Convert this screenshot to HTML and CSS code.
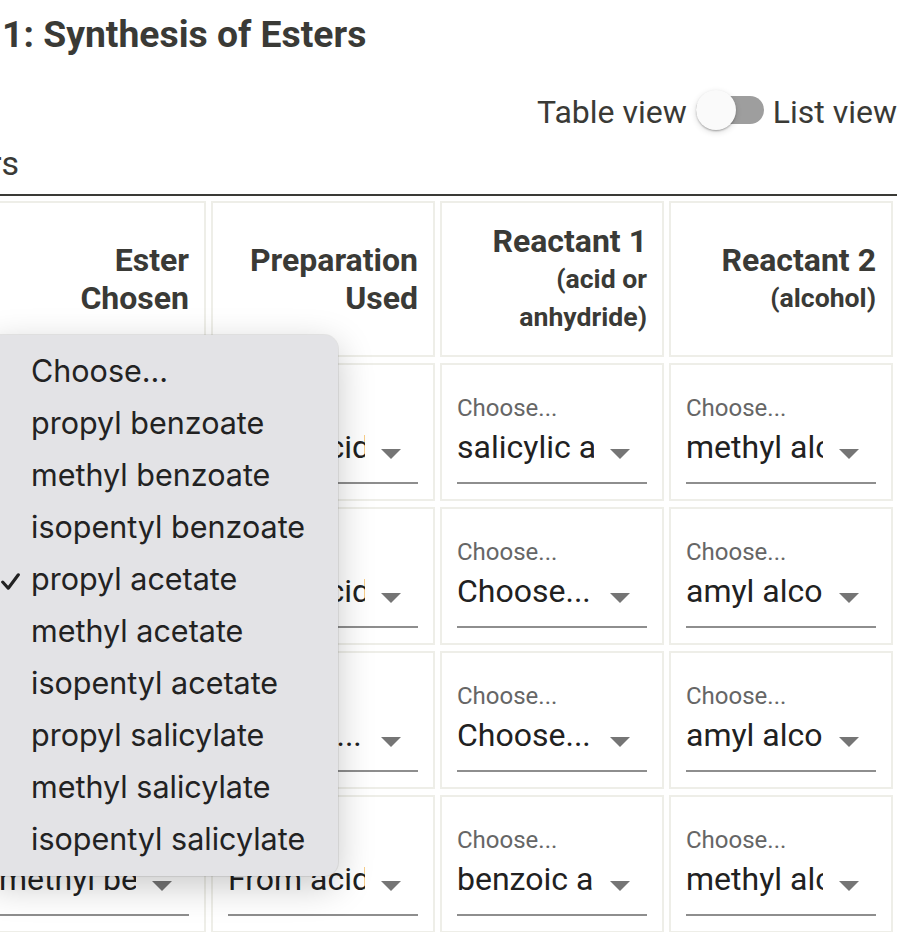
FILE: index.html
```html
<!DOCTYPE html>
<html lang="en">
<head>
<meta charset="utf-8">
<title>Synthesis of Esters</title>
<link rel="stylesheet" href="styles.css">
</head>
<body>
<div class="page">
  <h1 class="title">1: Synthesis of Esters</h1>

  <div class="view-toggle">
    <span class="opt">Table view</span>
    <span class="switch"><span class="switch-track"></span><span class="switch-thumb"></span></span>
    <span class="opt">List view</span>
  </div>

  <div class="subhead">Esters</div>
  <div class="rule"></div>

  <div class="grid">
    <div class="th"><div><span class="th-main">Ester</span><span class="th-main">Chosen</span></div></div>
    <div class="th"><div><span class="th-main">Preparation</span><span class="th-main">Used</span></div></div>
    <div class="th"><div><span class="th-main">Reactant 1</span><span class="th-sub">(acid or</span><span class="th-sub">anhydride)</span></div></div>
    <div class="th"><div><span class="th-main">Reactant 2</span><span class="th-sub">(alcohol)</span></div></div>

    <div class="td"><div class="field-label">Choose...</div><div class="select"><span class="select-value">propyl benzoate</span><svg class="select-arrow" viewBox="0 0 10 5"><path d="M0 0l5 5 5-5z"/></svg></div></div>
    <div class="td"><div class="field-label">Choose...</div><div class="select"><span class="select-value">From acid</span><svg class="select-arrow" viewBox="0 0 10 5"><path d="M0 0l5 5 5-5z"/></svg></div></div>
    <div class="td"><div class="field-label">Choose...</div><div class="select"><span class="select-value">salicylic acid</span><svg class="select-arrow" viewBox="0 0 10 5"><path d="M0 0l5 5 5-5z"/></svg></div></div>
    <div class="td"><div class="field-label">Choose...</div><div class="select"><span class="select-value">methyl alcohol</span><svg class="select-arrow" viewBox="0 0 10 5"><path d="M0 0l5 5 5-5z"/></svg></div></div>

    <div class="td"><div class="field-label">Choose...</div><div class="select"><span class="select-value">propyl acetate</span><svg class="select-arrow" viewBox="0 0 10 5"><path d="M0 0l5 5 5-5z"/></svg></div></div>
    <div class="td"><div class="field-label">Choose...</div><div class="select"><span class="select-value">From acid</span><svg class="select-arrow" viewBox="0 0 10 5"><path d="M0 0l5 5 5-5z"/></svg></div></div>
    <div class="td"><div class="field-label">Choose...</div><div class="select"><span class="select-value">Choose...</span><svg class="select-arrow" viewBox="0 0 10 5"><path d="M0 0l5 5 5-5z"/></svg></div></div>
    <div class="td"><div class="field-label">Choose...</div><div class="select"><span class="select-value">amyl alcohol</span><svg class="select-arrow" viewBox="0 0 10 5"><path d="M0 0l5 5 5-5z"/></svg></div></div>

    <div class="td"><div class="field-label">Choose...</div><div class="select"><span class="select-value">Choose...</span><svg class="select-arrow" viewBox="0 0 10 5"><path d="M0 0l5 5 5-5z"/></svg></div></div>
    <div class="td"><div class="field-label">Choose...</div><div class="select"><span class="select-value">Choose...</span><svg class="select-arrow" viewBox="0 0 10 5"><path d="M0 0l5 5 5-5z"/></svg></div></div>
    <div class="td"><div class="field-label">Choose...</div><div class="select"><span class="select-value">Choose...</span><svg class="select-arrow" viewBox="0 0 10 5"><path d="M0 0l5 5 5-5z"/></svg></div></div>
    <div class="td"><div class="field-label">Choose...</div><div class="select"><span class="select-value">amyl alcohol</span><svg class="select-arrow" viewBox="0 0 10 5"><path d="M0 0l5 5 5-5z"/></svg></div></div>

    <div class="td"><div class="field-label">Choose...</div><div class="select"><span class="select-value">methyl benzoate</span><svg class="select-arrow" viewBox="0 0 10 5"><path d="M0 0l5 5 5-5z"/></svg></div></div>
    <div class="td"><div class="field-label">Choose...</div><div class="select"><span class="select-value">From acid</span><svg class="select-arrow" viewBox="0 0 10 5"><path d="M0 0l5 5 5-5z"/></svg></div></div>
    <div class="td"><div class="field-label">Choose...</div><div class="select"><span class="select-value">benzoic acid</span><svg class="select-arrow" viewBox="0 0 10 5"><path d="M0 0l5 5 5-5z"/></svg></div></div>
    <div class="td"><div class="field-label">Choose...</div><div class="select"><span class="select-value">methyl alcohol</span><svg class="select-arrow" viewBox="0 0 10 5"><path d="M0 0l5 5 5-5z"/></svg></div></div>
  </div>

  <ul class="menu">
    <li class="menu-item">Choose...</li>
    <li class="menu-item">propyl benzoate</li>
    <li class="menu-item">methyl benzoate</li>
    <li class="menu-item">isopentyl benzoate</li>
    <li class="menu-item"><svg class="check" viewBox="0 0 17 15"><polyline points="1.5,8 6.5,13.5 15.5,1.5"/></svg>propyl acetate</li>
    <li class="menu-item">methyl acetate</li>
    <li class="menu-item">isopentyl acetate</li>
    <li class="menu-item">propyl salicylate</li>
    <li class="menu-item">methyl salicylate</li>
    <li class="menu-item">isopentyl salicylate</li>
  </ul>
</div>
</body>
</html>
```

FILE: styles.css
```css
* { box-sizing: border-box; }

body {
  margin: 0;
  overflow: hidden;
  background: #ffffff;
  font-family: Roboto, "Noto Sans", sans-serif;
  color: #3a3a36;
}

.page {
  position: relative;
  width: 919px;
  margin-left: -22px;
}

.title {
  margin: 0;
  padding: 12px 0 0 24px;
  font-size: 37.3px;
  line-height: 44px;
  font-weight: 700;
  color: #3a3a36;
}

.view-toggle {
  display: flex;
  justify-content: flex-end;
  align-items: center;
  height: 48px;
  margin-top: 30px;
  font-size: 32px;
  color: #3a3a36;
}

.opt {
  line-height: 48px;
  padding-top: 4px;
}

.switch {
  position: relative;
  width: 68px;
  height: 40px;
  margin: 0 9px;
}

.switch-track {
  position: absolute;
  left: 0;
  top: 6px;
  width: 68px;
  height: 28px;
  border-radius: 14px;
  background: #9e9e9e;
}

.switch-thumb {
  position: absolute;
  left: 0;
  top: 0;
  width: 40px;
  height: 40px;
  border-radius: 50%;
  background: #fafafa;
  box-shadow: 0 2px 2px -1px rgba(0,0,0,.2), 0 1px 2px rgba(0,0,0,.14), 0 2px 6px rgba(0,0,0,.14);
}

.subhead {
  margin: 9px 0 0 -54px;
  font-size: 34px;
  line-height: 40px;
  color: #3a3a36;
}

.rule {
  height: 2px;
  margin-top: 11px;
  background: #3a3a36;
}

.grid {
  display: grid;
  grid-template-columns: repeat(4, 224px);
  grid-template-rows: 156px;
  grid-auto-rows: 138px;
  gap: 6px 5px;
  padding: 4.7px 4px 0;
}

.th {
  display: flex;
  align-items: center;
  justify-content: flex-end;
  padding: 0 15px;
  border: 2px solid #eeeee8;
  text-align: right;
  font-weight: 700;
  color: #3a3a36;
}

.th-main {
  display: block;
  font-size: 32px;
  line-height: 38px;
}

.th-sub {
  display: block;
  font-size: 26.6px;
  line-height: 38px;
}

.td {
  display: flex;
  flex-direction: column;
  justify-content: flex-end;
  padding: 0 15px 15px;
  border: 2px solid #eeeee8;
}

.field-label {
  margin-bottom: 2px;
  font-size: 24px;
  line-height: 28px;
  color: #666666;
}

.select {
  display: flex;
  align-items: flex-start;
  border-bottom: 2px solid #8e8e8e;
}

.select-value {
  flex: 1;
  min-width: 0;
  overflow: hidden;
  white-space: nowrap;
  padding-bottom: 12px;
  font-size: 32px;
  line-height: 46px;
  color: #212121;
}

.select-arrow {
  flex: none;
  width: 20px;
  height: 10px;
  margin: 25px 17px 0 16px;
  fill: #757575;
}

.menu {
  position: absolute;
  left: 10px;
  top: 335px;
  width: 350px;
  margin: 0;
  padding: 10px 0 11px;
  list-style: none;
  background: #e3e3e6;
  border-radius: 14px;
  box-shadow: 0 0 0 1px rgba(0,0,0,.07), 0 10px 36px rgba(0,0,0,.22);
  font-family: Inter, "Noto Sans", sans-serif;
  font-size: 30.5px;
  color: #222222;
}

.menu-item {
  position: relative;
  height: 52px;
  line-height: 52px;
  padding-left: 43px;
  white-space: nowrap;
}

.check {
  position: absolute;
  left: 13px;
  top: 20px;
  width: 19px;
  height: 17px;
  fill: none;
  stroke: #222222;
  stroke-width: 2.8;
  stroke-linecap: round;
  stroke-linejoin: round;
}
```
